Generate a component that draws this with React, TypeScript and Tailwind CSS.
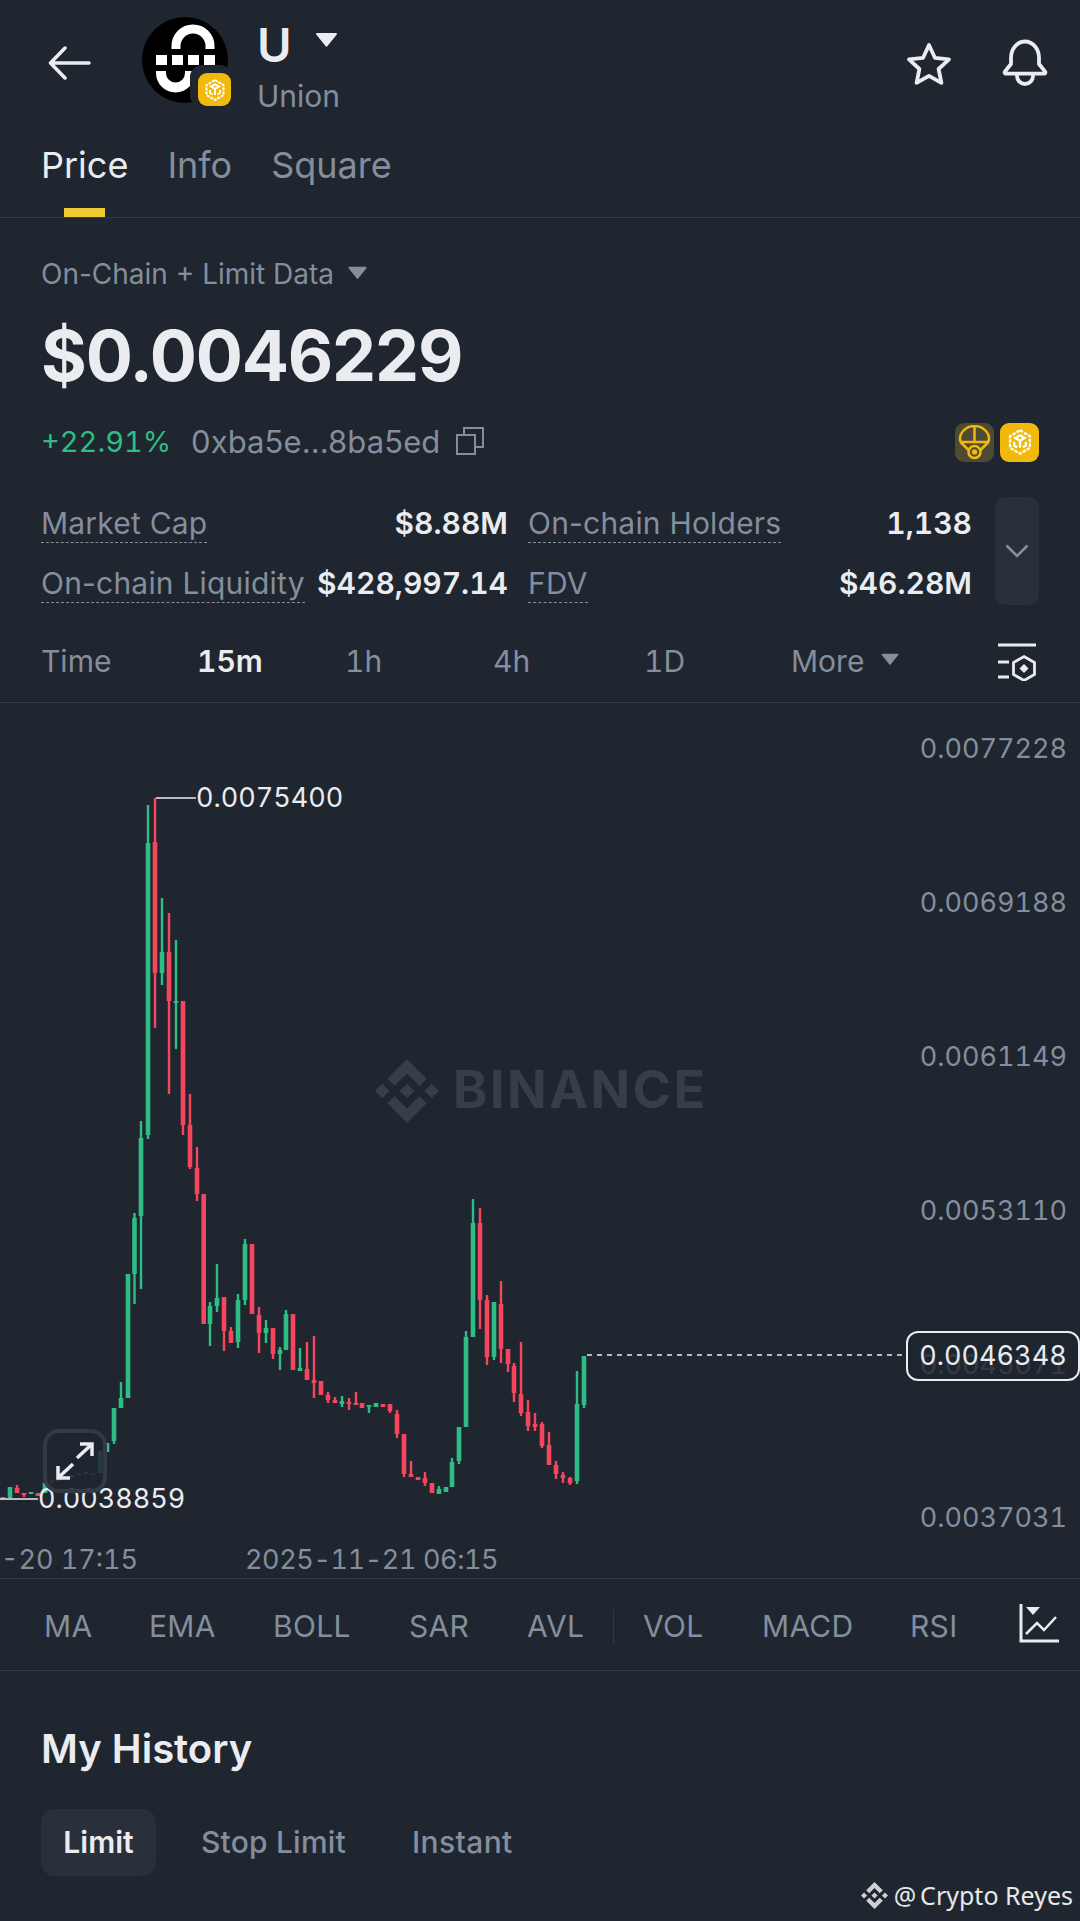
import React from "react";

const G = "#2EBD85";
const R = "#F6465D";

// x, colour, wick top, body top, body bottom, wick bottom
const candles: [number, string, number, number, number, number][] = [
  [3, R, 1496, 1496, 1498, 1498],
  [10, G, 1486, 1486, 1497, 1497],
  [17, R, 1484, 1487, 1492, 1492],
  [24, R, 1492, 1492, 1494, 1496],
  [31, G, 1491, 1491, 1493, 1493],
  [38, R, 1492, 1492, 1495, 1495],
  [45, G, 1482, 1482, 1492, 1492],
  [52, R, 1479, 1479, 1482, 1482],
  [58, G, 1477, 1477, 1480, 1480],
  [65, G, 1476, 1476, 1478, 1478],
  [72, G, 1474, 1474, 1477, 1477],
  [79, G, 1472, 1472, 1474, 1474],
  [86, G, 1471, 1471, 1473, 1473],
  [93, R, 1472, 1472, 1474, 1474],
  [100, G, 1450, 1450, 1472, 1472],
  [107, G, 1442, 1442, 1451, 1451],
  [114, G, 1407, 1407, 1440, 1443],
  [121, G, 1381, 1397, 1407, 1407],
  [128, G, 1273, 1273, 1397, 1397],
  [134.5, G, 1212, 1217, 1273, 1303],
  [141, G, 1120, 1137, 1215, 1288],
  [148, G, 804, 842, 1134, 1138],
  [155, R, 797, 841, 972, 1027],
  [162, G, 897, 951, 972, 984],
  [169, R, 912, 951, 1000, 1093],
  [176, G, 939, 1000, 1002, 1048],
  [183, R, 1000, 1000, 1124, 1134],
  [190, R, 1093, 1124, 1166, 1168],
  [197, R, 1146, 1167, 1193, 1200],
  [203.7, R, 1193, 1193, 1323, 1323],
  [210, G, 1301, 1305, 1323, 1345],
  [217, G, 1263, 1297, 1305, 1311],
  [224, R, 1296, 1296, 1330, 1350],
  [231, R, 1326, 1330, 1342, 1342],
  [238, G, 1293, 1299, 1341, 1347],
  [245, G, 1238, 1243, 1299, 1304],
  [252, R, 1243, 1243, 1313, 1313],
  [259, R, 1306, 1314, 1332, 1352],
  [266, G, 1319, 1327, 1332, 1342],
  [273, R, 1327, 1327, 1353, 1358],
  [280, G, 1346, 1349, 1353, 1369],
  [286, G, 1309, 1313, 1349, 1349],
  [293, R, 1313, 1313, 1369, 1369],
  [300, G, 1347, 1367, 1370, 1370],
  [307, R, 1341, 1368, 1379, 1379],
  [314, R, 1335, 1379, 1382, 1397],
  [321, R, 1380, 1380, 1394, 1394],
  [328, R, 1391, 1394, 1399, 1402],
  [335, R, 1396, 1399, 1402, 1402],
  [342, G, 1395, 1400, 1403, 1406],
  [349, R, 1397, 1401, 1403, 1409],
  [356, R, 1391, 1402, 1404, 1404],
  [362, R, 1402, 1402, 1407, 1407],
  [369, G, 1404, 1404, 1406, 1412],
  [376, G, 1402, 1402, 1406, 1406],
  [383, R, 1403, 1403, 1406, 1406],
  [390, R, 1403, 1403, 1410, 1412],
  [397, R, 1409, 1413, 1433, 1437],
  [404, R, 1433, 1433, 1473, 1476],
  [411, R, 1460, 1473, 1476, 1476],
  [418, R, 1476, 1476, 1479, 1479],
  [425, R, 1471, 1477, 1482, 1485],
  [432, R, 1482, 1482, 1492, 1492],
  [439, G, 1485, 1488, 1493, 1493],
  [446, G, 1486, 1486, 1491, 1491],
  [452, G, 1457, 1461, 1486, 1486],
  [459, G, 1426, 1426, 1460, 1463],
  [466, G, 1330, 1336, 1426, 1426],
  [473, G, 1198, 1222, 1336, 1336],
  [480, R, 1207, 1222, 1299, 1328],
  [487, R, 1294, 1299, 1356, 1364],
  [494, G, 1301, 1301, 1356, 1359],
  [501, R, 1280, 1303, 1348, 1362],
  [508, R, 1348, 1348, 1363, 1371],
  [514, R, 1362, 1365, 1392, 1401],
  [521, R, 1341, 1393, 1412, 1415],
  [528, R, 1399, 1411, 1425, 1430],
  [535, R, 1412, 1423, 1426, 1430],
  [542, R, 1421, 1423, 1445, 1447],
  [549, R, 1431, 1444, 1464, 1464],
  [556, R, 1460, 1464, 1473, 1478],
  [563, R, 1471, 1474, 1477, 1482],
  [570, R, 1476, 1477, 1482, 1484],
  [577, G, 1370, 1403, 1480, 1483],
  [584, G, 1355, 1355, 1404, 1407],
];

const axis = [
  { v: "0.0077228", c: "top-[30px]" },
  { v: "0.0069188", c: "top-[184px]" },
  { v: "0.0061149", c: "top-[338px]" },
  { v: "0.0053110", c: "top-[492px]" },
  { v: "0.0045071", c: "top-[646px]" },
  { v: "0.0037031", c: "top-[799px]" },
];

const BN =
  "M38.73 53.2l24.59-24.58 24.6 24.6 14.3-14.31L63.32 0 24.43 38.9zM0 63.31l14.3-14.31 14.31 14.31-14.31 14.3zM38.73 73.41L63.32 98l24.6-24.6 14.31 14.29-38.9 38.91-38.91-38.88-.02-.02zM98 63.31l14.3-14.31 14.31 14.3-14.31 14.32zM77.83 63.3L63.32 48.78 52.59 59.51l-1.24 1.23-2.54 2.54 14.51 14.5 14.51-14.47z";

function Cube({ size }: { size: number }) {
  return (
    <svg width={size} height={size} viewBox="0 0 24 24" fill="none" stroke="#fff" strokeWidth="2" strokeDasharray="3 1">
      <path d="M12 2l8.5 5v10L12 22l-8.5-5V7z" />
      <path d="M8 8.5l4-2.2 4 2.2-4 2.3zM12 11v6" strokeDasharray="none" />
      <path d="M7 12v3l2.5 1.5M17 12v3l-2.5 1.5" strokeDasharray="none" />
    </svg>
  );
}

function Caret({ cls }: { cls: string }) {
  return (
    <svg className={cls} viewBox="0 0 22 15">
      <path d="M1.5 1h19a1 1 0 0 1 .8 1.6L12 14a1.2 1.2 0 0 1-2 0L.7 2.6A1 1 0 0 1 1.500 1z" fill="currentColor" />
    </svg>
  );
}

function Label({ text }: { text: string }) {
  return <span className="border-b border-dashed border-[#848E9C] h-[38px] leading-[36px] tracking-[0.2px] text-[#848E9C]">{text}</span>;
}

export default function App() {
  return (
    <div className="w-[1080px] h-[1921px] overflow-hidden bg-[#1F2630] text-[#EAECEF] [font-family:Inter,sans-serif]">
      {/* header */}
      <div className="h-[130px] flex items-start">
        <svg className="ml-[48px] mt-[46px]" width="44" height="34" viewBox="0 0 44 34" fill="none" stroke="#EAECEF" strokeWidth="3.5" strokeLinecap="round" strokeLinejoin="round">
          <path d="M41 17H3M17 2L2.500 17 17 32" />
        </svg>
        <div className="relative ml-[50px] mt-[17px] w-[88px] h-[88px]">
          <svg width="86" height="86" viewBox="0 0 86 86">
            <circle cx="43" cy="43" r="43" fill="#000" />
            <path d="M34 32V29A17 17 0 0 1 68 29V32" fill="none" stroke="#fff" strokeWidth="9" />
            <rect x="14" y="38" width="11" height="10" fill="#fff" />
            <rect x="30" y="38" width="11" height="10" fill="#fff" />
            <rect x="46" y="38" width="11" height="10" fill="#fff" />
            <rect x="62" y="38" width="11" height="10" fill="#fff" />
            <path d="M19 54V56A14.500 14.500 0 0 0 48 56V54" fill="none" stroke="#fff" strokeWidth="10" />
          </svg>
          <div className="absolute left-[48px] top-[48px] w-[42px] h-[42px] rounded-[12px] bg-[#1F2630] flex items-center justify-center">
            <div className="mt-[7px] ml-[7px] w-[33px] h-[33px] rounded-[9px] bg-[#F0B90B] flex items-center justify-center">
              <Cube size={24} />
            </div>
          </div>
        </div>
        <div className="ml-[27px] mt-[19px] flex flex-col">
          <div className="flex items-center h-[50px]">
            <span className="text-[47px] font-semibold leading-none">U</span>
            <Caret cls="ml-[23px] mb-[10px] w-[23px] h-[15px] text-[#EAECEF]" />
          </div>
          <span className="mt-[7px] text-[30px] leading-[40px] text-[#848E9C]">Union</span>
        </div>
        <div className="ml-auto mr-[32px] mt-[39px] flex items-start gap-[50px]">
          <svg className="mt-[3px]" width="46" height="44" viewBox="0 0 46 44" fill="none" stroke="#EAECEF" strokeWidth="3.800" strokeLinejoin="round">
            <path d="M23 3l5.900 12.800 14.100 1.600-10.400 9.600 2.800 13.800L23 33.900 10.600 40.800l2.800-13.800L3 17.400l14.100-1.600z" />
          </svg>
          <svg width="46" height="47" viewBox="0 0 46 47" fill="none" stroke="#EAECEF" strokeWidth="3.800" strokeLinejoin="round" strokeLinecap="round">
            <path d="M9 25V19a14 16.500 0 0 1 28 0v6l6 7.500a1.300 1.300 0 0 1-1 2.200H4a1.300 1.300 0 0 1-1-2.200z" />
            <path d="M15 37a8 8 0 0 0 16 0" />
          </svg>
        </div>
      </div>

      {/* tabs */}
      <div className="h-[88px] border-b border-[#333A45] pl-[41px] flex gap-[39px] text-[36px]">
        <div className="flex flex-col items-center">
          <span className="h-[78px] leading-[70px]">Price</span>
          <div className="h-[9px] w-[41px] bg-[#F0CB35]" />
        </div>
        <span className="leading-[70px] text-[#848E9C]">Info</span>
        <span className="leading-[70px] text-[#848E9C]">Square</span>
      </div>

      {/* price block */}
      <div className="px-[41px]">
        <div className="mt-[39px] h-[34px] flex items-center text-[28px] text-[#848E9C]">
          On-Chain + Limit Data
          <Caret cls="ml-[13px] mb-[4px] w-[21px] h-[13px] text-[#848E9C]" />
        </div>
        <div className="mt-[25px] h-[80px] leading-[80px] text-[70px] tracking-[-1.2px] font-bold">$0.0046229</div>
        <div className="mt-[24px] h-[44px] flex items-center text-[29px]">
          <span className="text-[#2EBD85] w-[150px] tabular-nums">+22.91%</span>
          <span className="text-[#848E9C] text-[31px] tracking-[0.1px]">0xba5e...8ba5ed</span>
          <svg className="ml-[16px] mb-[2px]" width="28" height="28" viewBox="0 0 28 28" fill="none" stroke="#848E9C" strokeWidth="2">
            <rect x="1" y="8" width="18" height="19" />
            <path d="M8 8V1h19v19h-8" />
          </svg>
          <div className="ml-auto flex gap-[6px]">
            <div className="w-[39px] h-[39px] rounded-[9px] bg-[#4F4B33] flex items-center justify-center">
              <svg width="33" height="35" viewBox="0 0 33 35" fill="none" stroke="#F0B90B" strokeWidth="2.500">
                <path d="M2 14a14.500 13 0 0 1 29 0c0 2-1 3-2 3H4c-1 0-2-1-2-3zM16.500 1.500V17M2.500 17l9 9M30.500 17l-9 9" />
                <circle cx="16.500" cy="27" r="6" />
                <circle cx="16.500" cy="27" r="1.500" fill="#F0B90B" />
              </svg>
            </div>
            <div className="w-[39px] h-[39px] rounded-[9px] bg-[#F0B90B] flex items-center justify-center">
              <Cube size={28} />
            </div>
          </div>
        </div>
      </div>

      {/* stats */}
      <div className="mt-[41px] pl-[41px] pr-[41px] h-[109px] flex text-[30px]">
        <div className="w-[467px] flex flex-col gap-[22px]">
          <div className="flex justify-between h-[38px]">
            <Label text="Market Cap" />
            <span className="font-semibold leading-[36px] tabular-nums">$8.88M</span>
          </div>
          <div className="flex justify-between h-[38px]">
            <Label text="On-chain Liquidity" />
            <span className="font-semibold leading-[36px] tabular-nums">$428,997.14</span>
          </div>
        </div>
        <div className="ml-[20px] w-[444px] flex flex-col gap-[22px]">
          <div className="flex justify-between h-[38px]">
            <Label text="On-chain Holders" />
            <span className="font-semibold leading-[36px] tabular-nums">1,138</span>
          </div>
          <div className="flex justify-between h-[38px]">
            <Label text="FDV" />
            <span className="font-semibold leading-[36px] tabular-nums">$46.28M</span>
          </div>
        </div>
        <div className="ml-[23px] -mt-[8px] w-[44px] h-[108px] rounded-[10px] bg-[#2A303B] flex items-center justify-center">
          <svg width="24" height="14" viewBox="0 0 24 14" fill="none" stroke="#848E9C" strokeWidth="2.500">
            <path d="M1.500 1.500L12 12 22.500 1.500" />
          </svg>
        </div>
      </div>

      {/* intervals */}
      <div className="mt-[27px] h-[62px] border-b border-[#333A45] pb-[20px] flex items-center pl-[41px] text-[30px] tabular-nums text-[#848E9C]">
        <span className="w-[71px]">Time</span>
        <span className="ml-[85px] w-[64px] text-[#EAECEF] font-semibold">15m</span>
        <span className="ml-[84px] w-[36px]">1h</span>
        <span className="ml-[112px] w-[37px]">4h</span>
        <span className="ml-[114px] w-[39px]">1D</span>
        <span className="ml-[108px] w-[76px]">More</span>
        <Caret cls="ml-[13px] mb-[6px] w-[20px] h-[12px] text-[#848E9C]" />
        <svg className="ml-[97px]" width="40" height="38" viewBox="0 0 40 38" fill="none" stroke="#EAECEF" strokeWidth="2.800">
          <path d="M1 2h38M1 19h11M1 34h11" />
          <path d="M27 13.500l10.500 6v12L27 37.500l-10.500-6v-12z" />
          <path d="M27 21l4.500 4.500L27 30l-4.500-4.500z" fill="#EAECEF" stroke="none" />
        </svg>
      </div>

      {/* chart */}
      <div className="relative h-[876px] border-b border-[#333A45] text-[27px] leading-[32px] tabular-nums">
        <svg className="block" width="1080" height="876" viewBox="0 702 1080 876">
          <g fill="#373E49">
            <path d={BN} transform="translate(375 1058) scale(0.505)" />
          </g>
          {candles.map(([x, c, wt, bt, bb, wb], i) => (
            <g key={i} fill={c}>
              <rect x={x - 1.2} y={wt} width="2.400" height={wb - wt} />
              <rect x={x - 2.300} y={bt} width="4.600" height={Math.max(bb - bt, 2)} />
            </g>
          ))}
          <path d="M156 797H196M0 1498H38" stroke="#EAECEF" strokeWidth="1.500" />
          <path d="M587 1354H906" stroke="#EAECEF" strokeWidth="1.500" strokeDasharray="5 5" />
        </svg>

        <span className="absolute left-[453px] top-[359px] text-[52px] leading-[56px] font-bold tracking-[2.500px] text-[#373E49]">BINANCE</span>

        {axis.map((a) => (
          <span key={a.v} className={`absolute right-[13px] text-[#848E9C] ${a.c}`}>{a.v}</span>
        ))}

        <span className="absolute left-[196px] top-[79px]">0.0075400</span>
        <span className="absolute left-[38px] top-[780px]">0.0038859</span>
        <span className="absolute left-[1px] top-[841px] text-[#848E9C]">-20 17:15</span>
        <span className="absolute left-[245px] top-[841px] tracking-[-0.4px] text-[#848E9C]">2025-11-21 06:15</span>

        <div className="absolute left-[906px] top-[628px] w-[174px] h-[50px] rounded-[12px] border-2 border-[#EAECEF] bg-[#1F2630]/80 flex items-center justify-center">0.0046348</div>

        <div className="absolute left-[43px] top-[726px] w-[64px] h-[64px] rounded-[16px] border-[4px] border-[#333A45] bg-[#1F2630]/85 flex items-center justify-center">
          <svg width="40" height="38" viewBox="0 0 40 38" fill="none" stroke="#EAECEF" strokeWidth="3.500">
            <path d="M22 16L37 2M25 2h12v12M18 22L3 36M15 36H3V24" />
          </svg>
        </div>
      </div>

      {/* indicators */}
      <div className="h-[92px] border-b border-[#333A45] flex items-center pl-[44px] pt-[3px] text-[30px] tracking-[0.3px] text-[#848E9C]">
        <span className="w-[48px]">MA</span>
        <span className="ml-[57px] w-[67px]">EMA</span>
        <span className="ml-[57px] w-[80px]">BOLL</span>
        <span className="ml-[56px] w-[61px]">SAR</span>
        <span className="ml-[57px] w-[58px]">AVL</span>
        <div className="ml-[28px] w-px h-[34px] bg-[#333A45]" />
        <span className="ml-[29px] w-[62px]">VOL</span>
        <span className="ml-[57px] w-[92px]">MACD</span>
        <span className="ml-[56px] w-[46px]">RSI</span>
        <svg className="ml-[63px] mb-[4px]" width="40" height="40" viewBox="0 0 40 40" fill="none" stroke="#EAECEF" strokeWidth="3">
          <path d="M2 1v36h37" strokeLinecap="round" />
          <path d="M7 30l11-11 7 7 12-13" strokeWidth="2.500" />
          <path d="M7 3h14l-7 8z" fill="#EAECEF" stroke="none" />
        </svg>
      </div>

      {/* history */}
      <div className="px-[41px]">
        <div className="mt-[55px] h-[46px] leading-[46px] text-[40px] font-semibold">My History</div>
        <div className="mt-[37px] flex items-center text-[30px] text-[#848E9C]">
          <span className="h-[67px] w-[115px] rounded-[14px] bg-[#2A303B] flex items-center justify-center text-[#EAECEF] font-semibold">Limit</span>
          <span className="ml-[45px] font-medium tracking-[0.2px]">Stop Limit</span>
          <span className="ml-[66px] font-medium tracking-[0.4px]">Instant</span>
        </div>
      </div>

      {/* watermark */}
      <div className="mt-[2px] mr-[7px] flex justify-end items-center text-[#E8E8E8] [font-family:'Noto_Sans',sans-serif] text-[25px] leading-[34px]">
        <svg className="mr-[6px]" width="27" height="27" viewBox="0 0 126.610 126.610" fill="#D0D0D0">
          <path d={BN} />
        </svg>
        <span className="mr-[4px]">@</span>
        <span>Crypto Reyes</span>
      </div>
    </div>
  );
}
